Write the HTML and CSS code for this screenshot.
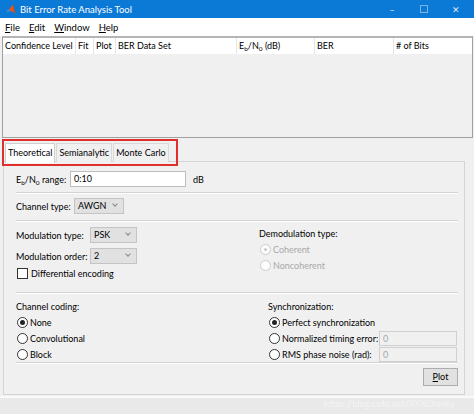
FILE: index.html
```html
<!DOCTYPE html>
<html lang="en">
<head>
    <meta charset="UTF-8">
    <title>Bit Error Rate Analysis Tool</title>
    <link rel="stylesheet" href="styles.css">
</head>
<body>
<div class="window">
    <!-- Title bar -->
    <div class="titlebar">
        <svg class="app-icon" width="10" height="11" viewBox="0 0 10 11">
            <path d="M0 7 L3 5.5 L4.5 7 L2 8.5 Z" fill="#3a8fd8"/>
            <path d="M3 5.5 L7 0.5 L9.5 10 L7.5 8 L4.5 7 Z" fill="#e8551c"/>
            <path d="M7 0.5 L9.5 10 L8 6 Z" fill="#b7310f"/>
        </svg>
        <span class="title">Bit Error Rate Analysis Tool</span>
        <div class="controls">
            <span class="ctl">&#8211;</span>
            <span class="ctl"><i class="box"></i></span>
            <span class="ctl">&#10005;</span>
        </div>
    </div>

    <!-- Menu -->
    <div class="menubar">
        <span><u>F</u>ile</span>
        <span><u>E</u>dit</span>
        <span><u>W</u>indow</span>
        <span><u>H</u>elp</span>
    </div>

    <!-- Results table -->
    <div class="results">
        <div class="results-head">
            <div class="col c1">Confidence Level</div>
            <div class="col c2">Fit</div>
            <div class="col c3">Plot</div>
            <div class="col c4">BER Data Set</div>
            <div class="col c5">E<sub>b</sub>/N<sub>0</sub> (dB)</div>
            <div class="col c6">BER</div>
            <div class="col c7"># of Bits</div>
        </div>
        <div class="results-body"></div>
    </div>

    <!-- Tabs -->
    <div class="tabs">
        <div class="tab active">Theoretical</div>
        <div class="tab">Semianalytic</div>
        <div class="tab">Monte Carlo</div>
        <div class="highlight"></div>
    </div>

    <div class="panel">
        <div class="row ebno">
            <span class="label l-ebno">E<sub>b</sub>/N<sub>0</sub> range:</span>
            <span class="textbox wide">0:10</span>
            <span class="unit">dB</span>
        </div>
        <div class="sep"></div>

        <div class="row channel">
            <span class="label l-chan">Channel type:</span>
            <span class="select w-awgn">AWGN<i class="caret"></i></span>
        </div>
        <div class="sep"></div>

        <div class="section modulation">
            <div class="col-left">
                <div class="line">
                    <span class="label l-mod">Modulation type:</span>
                    <span class="select w-mod">PSK<i class="caret"></i></span>
                </div>
                <div class="line">
                    <span class="label l-mod">Modulation order:</span>
                    <span class="select w-mod">2<i class="caret"></i></span>
                </div>
                <div class="line check">
                    <span class="checkbox"></span>Differential encoding
                </div>
            </div>
            <div class="col-right demod">
                <div class="opt head">Demodulation type:</div>
                <div class="opt disabled"><span class="radio on"></span>Coherent</div>
                <div class="opt disabled"><span class="radio"></span>Noncoherent</div>
            </div>
        </div>
        <div class="sep"></div>

        <div class="section coding">
            <div class="col-left">
                <div class="opt head">Channel coding:</div>
                <div class="opt"><span class="radio on"></span>None</div>
                <div class="opt"><span class="radio"></span>Convolutional</div>
                <div class="opt"><span class="radio"></span>Block</div>
            </div>
            <div class="col-right sync">
                <div class="opt head">Synchronization:</div>
                <div class="opt"><span class="radio on"></span>Perfect synchronization</div>
                <div class="opt"><span class="radio"></span><span class="opt-text">Normalized timing error:</span><span class="textbox off">0</span></div>
                <div class="opt"><span class="radio"></span><span class="opt-text">RMS phase noise (rad):</span><span class="textbox off">0</span></div>
            </div>
        </div>
        <div class="sep"></div>

        <div class="actions">
            <span class="button"><u>P</u>lot</span>
        </div>
    </div>

    <div class="footer">
        <span class="watermark">https://blog.csdn.net/XXXChenlu</span>
    </div>
</div>
</body>
</html>
```

FILE: styles.css
```css
body {
    margin: 0;
    font-family: Lato, "Liberation Sans", sans-serif;
    font-size: 9px;
    color: #000;
    background: #f0f0f0;
}
.window {
    width: 474px;
    height: 414px;
    overflow: hidden;
    position: relative;
}
sub {
    font-size: 6.5px;
    vertical-align: -2px;
    line-height: 0;
}

/* title bar */
.titlebar {
    height: 18px;
    background: #0b79d6;
    color: #fff;
    display: flex;
    align-items: center;
}
.app-icon {
    margin-left: 6px;
    margin-right: 4px;
}
.title {
    font-size: 9.5px;
}
.controls {
    margin-left: auto;
    display: flex;
    align-items: center;
    margin-right: 2px;
}
.ctl {
    width: 32px;
    display: flex;
    justify-content: center;
    font-size: 9px;
    color: rgba(255, 255, 255, 0.85);
}
.ctl .box {
    display: block;
    width: 6px;
    height: 6px;
    border: 1px solid rgba(255, 255, 255, 0.45);
}

/* menu */
.menubar {
    height: 18px;
    background: #fff;
    display: flex;
    align-items: center;
    gap: 9px;
    padding-left: 5px;
    font-size: 9.5px;
}

/* results table */
.results {
    margin: 0 1px 0 2px;
    border-top: 2px solid #b5b5b5;
    border-left: 1px solid #a0a0a0;
    border-right: 1px solid #a0a0a0;
    border-bottom: 1px solid #a0a0a0;
}
.results-head {
    height: 16px;
    background: #fff;
    display: flex;
}
.col {
    border-right: 1px solid #e5e5e5;
    padding-left: 2px;
    line-height: 16px;
    white-space: nowrap;
    overflow: hidden;
    box-sizing: border-box;
}
.c1 { width: 73px; }
.c2 { width: 18px; }
.c3 { width: 22px; }
.c4 { width: 121px; }
.c5 { width: 78px; }
.c6 { width: 79px; }
.c7 { flex: 1; border-right: none; }
.results-body {
    height: 83px;
    background: #f0f0f0;
}

/* tabs */
.tabs {
    position: relative;
    display: flex;
    margin: 5px 0 -1px 5px;
    height: 19px;
}
.tab {
    padding: 0 2px;
    line-height: 18px;
    background: #f0f0f0;
    border: 1px solid #d9d9d9;
    border-bottom: none;
    margin-right: 1px;
}
.tab.active {
    background: #fff;
    border-color: #d0d0d0;
    position: relative;
    z-index: 1;
    height: 19px;
}
.highlight {
    position: absolute;
    left: -3px;
    top: -4px;
    width: 172px;
    height: 23px;
    border: 2px solid #e0302e;
    z-index: 2;
}

/* panel */
.panel {
    margin-left: 3px;
    width: 462px;
    height: 234px;
    box-sizing: border-box;
    border: 1px solid #d4d4d4;
    background: #f0f0f0;
    padding: 0 6px 0 12px;
}
.row {
    display: flex;
    align-items: center;
    height: 16px;
}
.ebno {
    margin-top: 9px;
}
.channel {
    margin-top: 4px;
}
.label {
    white-space: nowrap;
    flex: none;
}
.l-ebno { width: 54px; }
.l-chan { width: 58px; }
.l-mod { width: 74px; }
.unit {
    margin-left: 7px;
}
.sep {
    border-top: 1px solid #d3d3d3;
    border-bottom: 1px solid #fff;
}
.ebno + .sep {
    margin-top: 5px;
}
.channel + .sep {
    margin-top: 6px;
}

.textbox {
    box-sizing: border-box;
    height: 16px;
    background: #fff;
    border: 1px solid #bdbdbd;
    padding-left: 3px;
    line-height: 14px;
}
.textbox.wide {
    width: 116px;
}
.textbox.off {
    width: 78px;
    height: 15px;
    line-height: 13px;
    background: #f0f0f0;
    border-color: #d0d0d0;
    color: #a8a8a8;
    margin-left: auto;
}
.select {
    box-sizing: border-box;
    height: 16px;
    background: #e1e1e1;
    border: 1px solid #c4c4c4;
    padding-left: 3px;
    line-height: 14px;
    position: relative;
}
.w-awgn { width: 50px; }
.w-mod { width: 47px; }
.caret {
    position: absolute;
    right: 6px;
    top: 3px;
    width: 3px;
    height: 3px;
    border-right: 1px solid #8a8a8a;
    border-bottom: 1px solid #8a8a8a;
    transform: rotate(45deg);
}

/* two column sections */
.section {
    display: flex;
}
.modulation {
    height: 70px;
}
.modulation .col-left {
    width: 243px;
}
.modulation .line {
    display: flex;
    align-items: center;
    height: 16px;
    margin-top: 5px;
}
.modulation .line.check {
    height: 14px;
    margin-top: 2px;
}
.demod {
    padding-top: 4px;
}
.coding {
    height: 68px;
    padding-top: 4px;
    box-sizing: border-box;
}
.coding .col-left {
    width: 252px;
}
.sync {
    width: 189px;
}
.opt {
    display: flex;
    align-items: center;
    height: 16px;
    white-space: nowrap;
}
.demod .opt.head {
    height: 15px;
}
.opt.disabled {
    color: #a9a9a9;
}
.radio {
    width: 9px;
    height: 9px;
    border: 1px solid #333;
    border-radius: 50%;
    background: #fff;
    margin: 0 2px 0 1px;
    position: relative;
    flex: none;
}
.radio.on::after {
    content: "";
    position: absolute;
    left: 2px;
    top: 2px;
    width: 5px;
    height: 5px;
    border-radius: 50%;
    background: #222;
}
.disabled .radio {
    border-color: #cccccc;
    background: #fcfcfc;
}
.disabled .radio.on::after {
    background: #c8c8c8;
    left: 3px;
    top: 3px;
    width: 3px;
    height: 3px;
}
.checkbox {
    width: 9px;
    height: 9px;
    border: 1px solid #333;
    background: #fff;
    margin: 0 3px 0 1px;
}

/* plot button */
.actions {
    display: flex;
    justify-content: flex-end;
    margin-top: 4px;
}
.button {
    box-sizing: border-box;
    width: 35px;
    height: 18px;
    line-height: 16px;
    text-align: center;
    background: #e1e1e1;
    border: 1px solid #adadad;
}

/* bottom */
.footer {
    margin-top: 1px;
    height: 18px;
    border-top: 2px solid #fafafa;
    background: #e9e9e9;
    text-align: right;
}
.watermark {
    color: #f4f4f4;
    font-size: 9px;
    margin-right: 20px;
    line-height: 12px;
}
```
